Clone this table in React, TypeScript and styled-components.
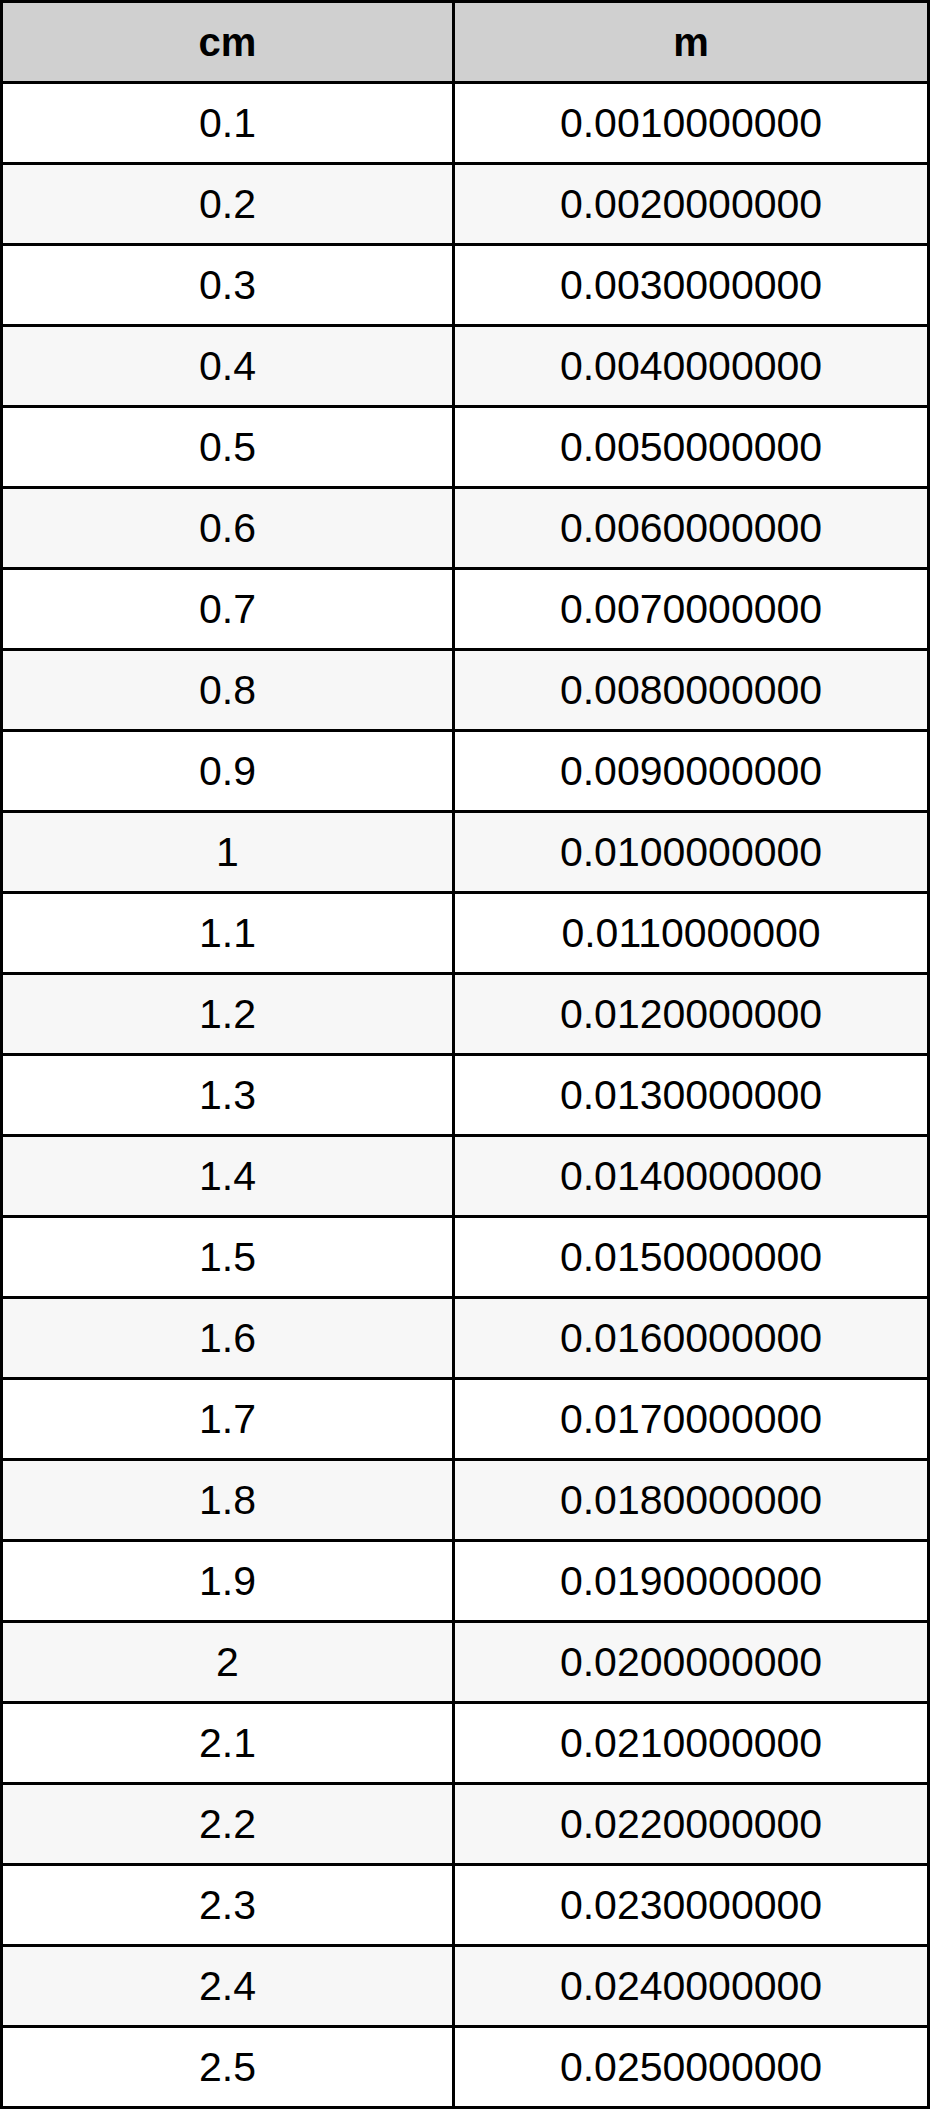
import styled, { createGlobalStyle } from 'styled-components';

const GlobalStyle = createGlobalStyle`
  html, body {
    margin: 0;
    padding: 0;
    background: #fff;
  }
  body {
    font-family: 'Liberation Sans', Arial, sans-serif;
    color: #000;
  }
`;

const rows = Array.from({ length: 25 }, (_, i) => {
  const cm = Math.round((i + 1)) / 10;
  return { cm: String(cm), m: (cm / 100).toFixed(10) };
});

export default function App() {
  return (
    <>
      <GlobalStyle />
      <Table>
        <colgroup>
          <col style={{ width: 449 }} />
          <col />
        </colgroup>
        <thead>
          <tr>
            <HeadCell>cm</HeadCell>
            <HeadCell>m</HeadCell>
          </tr>
        </thead>
        <tbody>
          {rows.map((row, i) => (
            <Row key={row.cm} $odd={i % 2 === 1}>
              <Cell>{row.cm}</Cell>
              <Cell>{row.m}</Cell>
            </Row>
          ))}
        </tbody>
      </Table>
    </>
  );
}

const Table = styled.table`
  width: 930px;
  table-layout: fixed;
  border-collapse: separate;
  border-spacing: 3px;
  background: #000;
`;

const HeadCell = styled.th`
  height: 78px;
  padding: 0;
  background: #d0d0d0;
  font-size: 40px;
  font-weight: 700;
  text-align: center;
  vertical-align: middle;
`;

const Row = styled.tr<{ $odd: boolean }>`
  background: ${(p) => (p.$odd ? '#f7f7f7' : '#ffffff')};
`;

const Cell = styled.td`
  height: 78px;
  padding: 0;
  font-size: 41px;
  text-align: center;
  vertical-align: middle;
`;
